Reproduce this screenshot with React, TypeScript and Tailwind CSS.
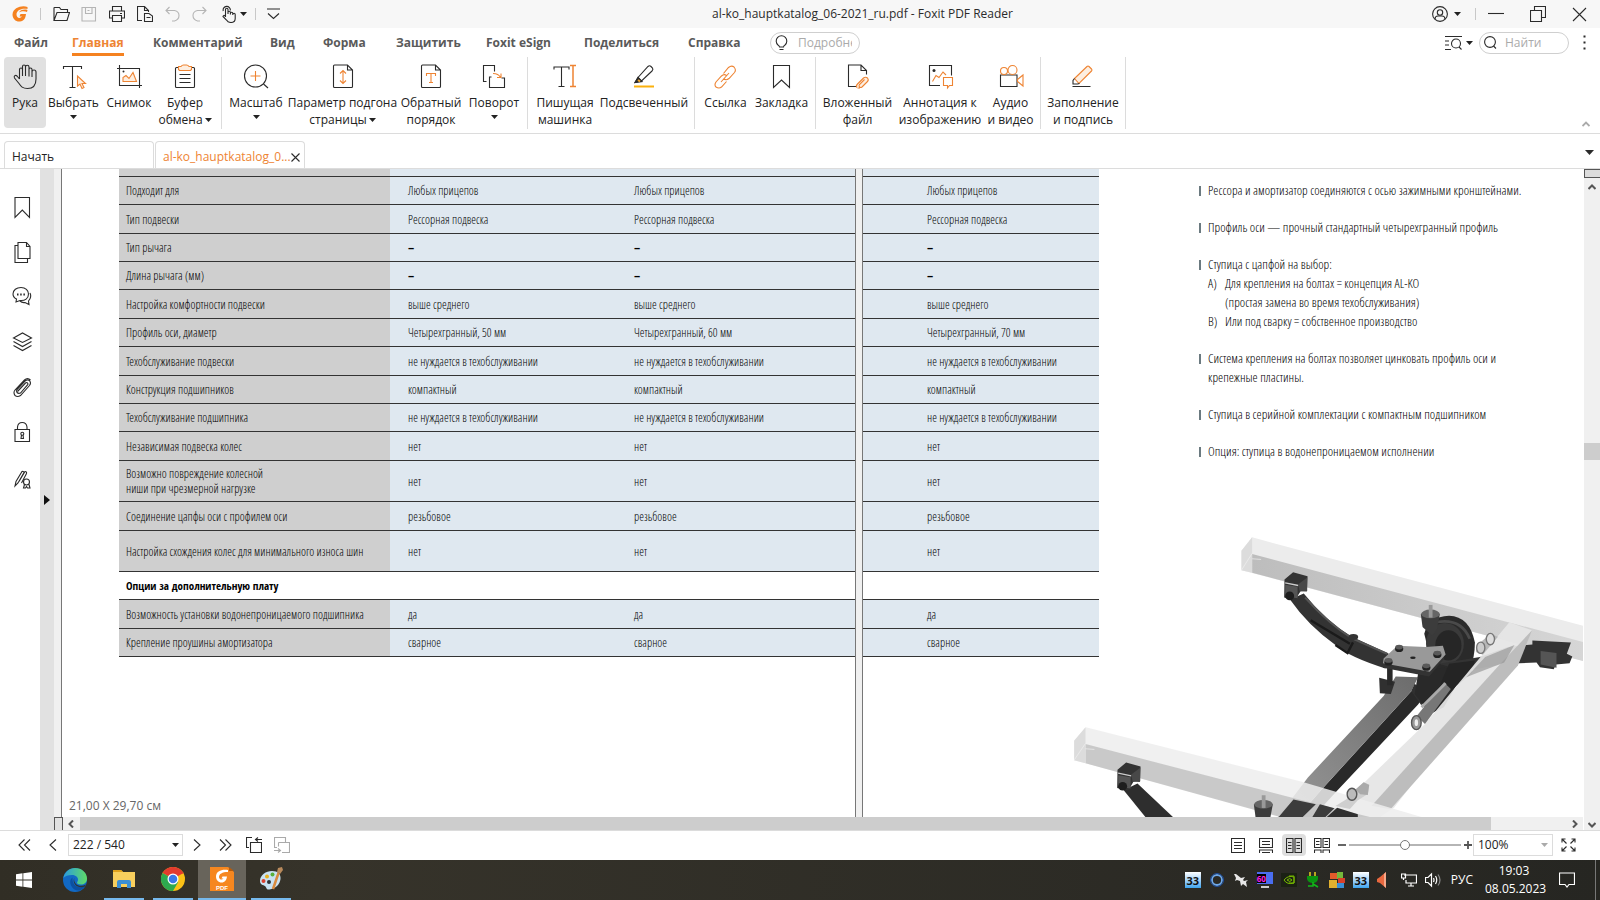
import { useState } from "react";
import type { ReactNode } from "react";

interface IconProps {
  w?: number;
  h?: number;
  box?: string;
  className?: string;
  children: ReactNode;
}

// Base for every line icon
function Icon({ w = 28, h = 28, box, className = "", children }: IconProps) {
  return (
    <svg
      width={w}
      height={h}
      viewBox={box ?? `0 0 ${w} ${h}`}
      fill="none"
      stroke="#2b2b2b"
      strokeWidth="1.1"
      className={`shrink-0 ${className}`}
      aria-hidden="true"
    >
      {children}
    </svg>
  );
}

function Caret({ className = "" }: { className?: string }) {
  return (
    <svg width="7" height="4" viewBox="0 0 7 4" className={`shrink-0 ${className}`} aria-hidden="true">
      <path d="M0 0h7L3.500 4z" fill="currentColor" />
    </svg>
  );
}

const O = "#ee8433";

const toolIcons: Record<string, ReactNode> = {
  hand: (
    <Icon>
      <path d="M8.500 16V6.500a1.500 1.500 0 0 1 3 0V13M11.500 13V3.500a1.500 1.500 0 0 1 3 0V13M14.500 12.500V4a1.500 1.500 0 0 1 3.500 0v9.500M18 13.500V6.500a1.500 1.500 0 0 1 3 0V9M21 14V9a1.500 1.500 0 0 1 4 0v7c0 6-3 9.500-8.500 9.500-5 0-6.500-2-8.500-5L3.500 15c-1-2 1-3.500 2.500-2l2.500 3" />
    </Icon>
  ),
  select: (
    <Icon>
      <path d="M3.500 6V3.500h18V6M12.500 3.500v21M9.500 24.500h6" />
      <path d="M17.500 13v10l2.500-2 2 4.500 2-1-2-4h3.500z" stroke={O} fill="#fdeee0" />
    </Icon>
  ),
  snapshot: (
    <Icon>
      <path d="M4.500 2v20.500H27M2 5.500h22.500V25" />
      <path d="M8 18.500v-4l3-2 3 3 4-6 3.500 9z" stroke={O} fill="#fdeee0" />
      <circle cx="8.500" cy="8.500" r="1" fill="#2b2b2b" stroke="none" />
    </Icon>
  ),
  clipboard: (
    <Icon>
      <path d="M7 4.500H5.500q-1 0-1 1v18q0 1 1 1h17q1 0 1-1v-18q0-1-1-1H21M8.500 11.500h11M8.500 15.500h11M8.500 19.500h11" />
      <path d="M7.500 3.500H10q1-1.500 2.500-1.500h3q1.500 0 2.500 1.500h2.500v3l-1 1h-11l-1-1z" stroke={O} fill="#fdeee0" />
    </Icon>
  ),
  zoom: (
    <Icon>
      <circle cx="13.500" cy="13" r="11" />
      <path d="M21.500 21l4.500 4" />
      <path d="M13.500 8v10M8.500 13h10" stroke={O} />
    </Icon>
  ),
  fit: (
    <Icon>
      <path d="M4.500 3q0-1 1-1h13l5 5v16.500q0 1-1 1h-17q-1 0-1-1zM18.500 2v5h5" />
      <path d="M14 7.500v13M11 10.500l3-3 3 3M11 17.500l3 3 3-3" stroke={O} />
    </Icon>
  ),
  reflow: (
    <Icon>
      <path d="M4.500 3q0-1 1-1h13l5 5v16.500q0 1-1 1h-17q-1 0-1-1zM18.500 2v5h5" />
      <path d="M9.500 13v-2.500h9V13M14 10.500v9M12 19.500h4" stroke={O} />
    </Icon>
  ),
  rotate: (
    <Icon>
      <path d="M6.500 18.500h-3v-16h11v6M9.500 15v9.500h15v-9.500H21.500M9.500 15v-1h2" />
      <path d="M13 10.500c4 0 6 1 7.500 4M17 14.500h4v-4" stroke={O} />
    </Icon>
  ),
  typewriter: (
    <Icon>
      <path d="M3 6.500V4h15v2.500M10.500 4v19M7.500 23.500h6" />
      <path d="M19 2.500h6M22 2.500v21M19 23.500h6" stroke={O} strokeWidth="1.500" />
    </Icon>
  ),
  highlight: (
    <Icon>
      <path d="M5 19.500l3-5 10-11q1.500-1.500 3 0l1.500 1.500q1 1.500-.5 3l-10.500 10zM8 14.500l4 4" />
      <path d="M5 19.500l3-5 4 4z" fill="#2b2b2b" />
      <path d="M8 17l2 1.500" stroke="#f5a623" strokeWidth="2" />
      <path d="M4 23.500h20" stroke="#fbb10d" strokeWidth="2" />
    </Icon>
  ),
  link: (
    <Icon>
      <path
        d="M11.500 10.500l5-6q3-2.500 5.500-.5 2.500 3 .5 5.500l-5.500 6q-3 2.500-5.500 0M14.500 12.500q-2.500-2-5 .5l-5.500 6q-2 3 0 5 3 2 5.500 0l5-5.500M9 19l8-9"
        stroke={O}
      />
    </Icon>
  ),
  bookmark: (
    <Icon>
      <path d="M5.500 2.500h16v22L13.500 17l-8 7.500z" />
    </Icon>
  ),
  attach: (
    <Icon>
      <path d="M12 23.500H4.500V2H17l5.500 5.500v4M17 2v5.500h5.500" />
      <path d="M13 24.500c-1-1-.5-2.500.5-3.500l6-6q2-1.500 4 0 1.500 2 0 3.500l-5.500 5.500q-1.500 1-2.500 0t0-2.500l5-5M13.500 25h2.500" stroke={O} fill="#fdeee0" />
    </Icon>
  ),
  imageNote: (
    <Icon>
      <path d="M14 22.500H3.500v-20h22v10" />
      <circle cx="8" cy="7.500" r="1.500" fill="#2b2b2b" stroke="none" />
      <path d="M6.500 18.500l3.500-6 3 2 4-5.500 3 3M17.500 14.500h9v8h-3l-2 2.500v-2.500h-4z" stroke={O} />
    </Icon>
  ),
  media: (
    <Icon>
      <path d="M3.500 12h16.500v11.500H3.500z" />
      <circle cx="7" cy="8" r="3.500" stroke={O} />
      <circle cx="15.500" cy="7" r="4.500" stroke={O} />
      <path d="M20.500 16.500l5.500-4.500v11l-5.500-4.500z" stroke={O} />
    </Icon>
  ),
  sign: (
    <Icon>
      <path d="M5.500 15.500L18 3.500q1-1 2 0l2.500 2.500q1 1 0 2L10 20.500z" stroke={O} fill="#fdeee0" />
      <path d="M5.500 15.500L4 17.500v3.500h4.500l2-.5M3.500 23.500h18" />
    </Icon>
  ),
};

interface Tool {
  id: string;
  width: string;
  lines: string[];
  caret?: "below" | "inline";
}

const toolGroups: { pad: string; tools: Tool[] }[] = [
  {
    pad: "pl-1 pr-2",
    tools: [
      { id: "hand", width: "w-[42px]", lines: ["Рука"] },
      { id: "select", width: "w-[55px]", lines: ["Выбрать"], caret: "below" },
      { id: "snapshot", width: "w-[56px]", lines: ["Снимок"] },
      { id: "clipboard", width: "w-[56px]", lines: ["Буфер", "обмена"], caret: "inline" },
    ],
  },
  {
    pad: "pl-1 pr-0.5",
    tools: [
      { id: "zoom", width: "w-[60px]", lines: ["Масштаб"], caret: "below" },
      { id: "fit", width: "w-[113px]", lines: ["Параметр подгона", "страницы"], caret: "inline" },
      { id: "reflow", width: "w-[64px]", lines: ["Обратный", "порядок"] },
      { id: "rotate", width: "w-[62px]", lines: ["Поворот"], caret: "below" },
    ],
  },
  {
    pad: "pl-1 pr-1",
    tools: [
      { id: "typewriter", width: "w-[66px]", lines: ["Пишущая", "машинка"] },
      { id: "highlight", width: "w-[92px]", lines: ["Подсвеченный"] },
    ],
  },
  {
    pad: "pl-1 pr-1",
    tools: [
      { id: "link", width: "w-[53px]", lines: ["Ссылка"] },
      { id: "bookmark", width: "w-[59px]", lines: ["Закладка"] },
    ],
  },
  {
    pad: "pl-1 pr-1",
    tools: [
      { id: "attach", width: "w-[75px]", lines: ["Вложенный", "файл"] },
      { id: "imageNote", width: "w-[90px]", lines: ["Аннотация к", "изображению"] },
      { id: "media", width: "w-[51px]", lines: ["Аудио", "и видео"] },
    ],
  },
  {
    pad: "pl-1 pr-1",
    tools: [{ id: "sign", width: "w-[76px]", lines: ["Заполнение", "и подпись"] }],
  },
];

const menu = [
  { label: "Файл", width: "w-[58px]" },
  { label: "Главная", width: "w-[81px]" },
  { label: "Комментарий", width: "w-[117px]" },
  { label: "Вид", width: "w-[53px]" },
  { label: "Форма", width: "w-[73px]" },
  { label: "Защитить", width: "w-[90px]" },
  { label: "Foxit eSign", width: "w-[98px]" },
  { label: "Поделиться", width: "w-[104px]" },
  { label: "Справка", width: "w-[82px]" },
];

interface SpecRow {
  label: string;
  values: string[];
  height: string;
  section?: boolean;
}

const same = (v: string) => [v, v, v];

const rows: SpecRow[] = [
  { label: "Подходит для", values: same("Любых прицепов"), height: "h-[28px]" },
  { label: "Тип подвески", values: same("Рессорная подвеска"), height: "h-[29px]" },
  { label: "Тип рычага", values: same("–"), height: "h-[28px]" },
  { label: "Длина рычага (мм)", values: same("–"), height: "h-[28px]" },
  { label: "Настройка комфортности подвески", values: same("выше среднего"), height: "h-[29px]" },
  {
    label: "Профиль оси, диаметр",
    values: ["Четырехгранный, 50 мм", "Четырехгранный, 60 мм", "Четырехгранный, 70 мм"],
    height: "h-[28px]",
  },
  { label: "Техобслуживание подвески", values: same("не нуждается в техобслуживании"), height: "h-[29px]" },
  { label: "Конструкция подшипников", values: same("компактный"), height: "h-[28px]" },
  { label: "Техобслуживание подшипника", values: same("не нуждается в техобслуживании"), height: "h-[28px]" },
  { label: "Независимая подвеска колес", values: same("нет"), height: "h-[29px]" },
  { label: "Возможно повреждение колесной\nниши при чрезмерной нагрузке", values: same("нет"), height: "h-[41px]" },
  { label: "Соединение цапфы оси с профилем оси", values: same("резьбовое"), height: "h-[29px]" },
  { label: "Настройка схождения колес для минимального износа шин", values: same("нет"), height: "h-[41px]" },
  { label: "Опции за дополнительную плату", values: [], height: "h-[28px]", section: true },
  { label: "Возможность установки водонепроницаемого подшипника", values: same("да"), height: "h-[29px]" },
  { label: "Крепление проушины амортизатора", values: same("сварное"), height: "h-[28px]" },
];

function TitleBar() {
  return (
    <header className="flex h-[28px] shrink-0 items-center bg-[#f7f7f7]">
      <div className="flex w-[44.5%] items-center">
        <svg width="16" height="16" viewBox="0 0 16 16" className="ml-3" aria-hidden="true">
          <path d="M15.500 1C10-1 1 1.500.5 8.500.5 13 4 16 8 15.500c4-.5 5.500-3 6-7.500H8.500l-1 2.500h2.500C8 13 4.500 12 4.500 8.500 4.500 4.500 9 2 15.500 3z" fill="#f58220" />
          <path d="M15.500 4C12 3 8 4 7 6.500c2-1.500 6-1.500 8-.5z" fill="#f58220" />
        </svg>
        <span className="ml-3 h-3 w-px bg-[#c8c8c8]" />
        <button aria-label="Открыть" className="ml-3">
          <Icon w={17} h={16}>
            <path d="M1 14.500V2q0-.5.5-.5h5l1.500 2h6.500v3M1 14.500L4 6.500h12.500l-2.500 8z" />
          </Icon>
        </button>
        <button aria-label="Сохранить" className="ml-[11px]">
          <Icon w={16} h={16}>
            <path d="M1 1.500h13.500v13.500H1zM4.500 1.500v6H11v-6M6.500 4.500h2" stroke="#b5b5b5" />
          </Icon>
        </button>
        <button aria-label="Печать" className="ml-3">
          <Icon w={16} h={16}>
            <path d="M3.500 5V.500h9V5M3.500 12H.5V5h15v7h-3M3.500 9.500h9v6h-9zM11 7.500h2" />
          </Icon>
        </button>
        <button aria-label="Создать" className="ml-3">
          <Icon w={16} h={16}>
            <path d="M5 14.500H.5V.5h7l4 4V6M7.500.5v4h4M7.500 7.500H12l3.500 2.500v5.500h-8zM9.500 11.500h4" />
          </Icon>
        </button>
        <button aria-label="Отменить" className="ml-3">
          <Icon w={15} h={16}>
            <path d="M4.500 1L1 4.500 4.500 8M1 4.500h8.500q4.500 1 4.500 5t-4.500 5.500H7" stroke="#b5b5b5" />
          </Icon>
        </button>
        <button aria-label="Повторить" className="ml-3">
          <Icon w={15} h={16}>
            <path d="M10.500 1L14 4.500 10.500 8M14 4.500H5.500Q1 5.500 1 9.500T5.500 15H8" stroke="#b5b5b5" />
          </Icon>
        </button>
        <button aria-label="Касание" className="ml-3.5 flex items-center gap-1">
          <Icon w={15} h={18}>
            <path d="M4.500 12V4.500a1.200 1.200 0 0 1 2.500 0V9M7 9V7.500a1.200 1.200 0 0 1 2.400 0V9.500M9.400 8.500a1.200 1.200 0 0 1 2.400 0V10M11.800 9.500a1.200 1.200 0 0 1 2.400 0v4q0 4-4.200 4-3 0-4.500-2.500l-3.500-3.500q.5-2 2.500-.3M2.300 6a3.600 3.600 0 1 1 7-.5" />
          </Icon>
          <Caret />
        </button>
        <span className="ml-2 h-3 w-px bg-[#c8c8c8]" />
        <button aria-label="Настроить панель" className="ml-[11px]">
          <Icon w={13} h={12}>
            <path d="M0 1h13M1 5.500l5.500 5 5.500-5" />
          </Icon>
        </button>
      </div>
      <h1 className="text-[12px] text-[#2b2b2b]">al-ko_hauptkatalog_06-2021_ru.pdf - Foxit PDF Reader</h1>
      <div className="flex flex-1 items-center justify-end pr-[13px]">
        <button aria-label="Учётная запись" className="flex items-center gap-1.5">
          <Icon w={16} h={16}>
            <circle cx="8" cy="8" r="7.400" />
            <circle cx="8" cy="6.500" r="2.700" />
            <path d="M3 13q0-3 3-3h4q3 0 3 3" />
          </Icon>
          <Caret />
        </button>
        <span className="ml-3.5 h-3 w-px bg-[#c8c8c8]" />
        <button aria-label="Свернуть" className="ml-3">
          <Icon w={16} h={16}>
            <path d="M0 7.500h16" />
          </Icon>
        </button>
        <button aria-label="Развернуть" className="ml-[26px]">
          <Icon w={16} h={16}>
            <path d="M.5 4.500h11v11H.5zM4.500 4.500v-4h11v11h-4" />
          </Icon>
        </button>
        <button aria-label="Закрыть" className="ml-[26px]">
          <Icon w={15} h={15}>
            <path d="M1 1l13 13M14 1L1 14" />
          </Icon>
        </button>
      </div>
    </header>
  );
}

function MenuBar() {
  return (
    <nav className="flex h-[29px] shrink-0 items-center pl-3.5">
      {menu.map((item) => (
        <div key={item.label} className={`shrink-0 ${item.width}`}>
          <button
            className={`border-b-3 pt-0.5 pb-px text-[12px] leading-[19px] font-bold whitespace-nowrap ${
              item.label === "Главная" ? "border-[#f58220] text-[#ee8433]" : "border-transparent text-[#5a5a5a]"
            }`}
          >
            {item.label}
          </button>
        </div>
      ))}
      <label className="flex h-[22px] w-[90px] items-center gap-2.5 rounded-full border border-[#cfcfcf] px-1">
        <Icon w={13} h={16}>
          <path d="M4.500 12Q4.500 11 3 10A5.300 5.300 0 1 1 10 10Q8.500 11 8.500 12zM4.500 14.500h4" />
        </Icon>
        <input aria-label="Подробнее" placeholder="Подробнее" className="w-[54px] text-[12px] outline-none placeholder:text-[#aaa]" />
      </label>
      <div className="ml-auto flex items-center pr-3.5">
        <button aria-label="Расширенный поиск" className="flex items-center gap-1">
          <Icon w={17} h={14}>
            <path d="M0 .5h17M0 5h4M0 9h4M0 13.500h6" />
            <circle cx="11" cy="7.500" r="4.500" />
            <path d="M14 11l2.500 2.500" />
          </Icon>
          <Caret />
        </button>
        <label className="ml-1.5 flex h-[22px] w-[90px] items-center gap-2 rounded-full border border-[#cfcfcf] px-1">
          <Icon w={13} h={13}>
            <circle cx="6" cy="6" r="5.400" />
            <path d="M9.500 10l2.500 2.500" />
          </Icon>
          <input aria-label="Найти" placeholder="Найти" className="w-[50px] text-[12px] outline-none placeholder:text-[#aaa]" />
        </label>
        <button aria-label="Ещё" className="ml-3.5">
          <svg width="3" height="15" viewBox="0 0 3 15" fill="#2b2b2b" aria-hidden="true">
            <path d="M.5.5h2v2h-2zM.5 6.500h2v2h-2zM.5 12.500h2v2h-2z" />
          </svg>
        </button>
      </div>
    </nav>
  );
}

function Ribbon() {
  return (
    <div className="flex h-[77px] shrink-0 items-start border-b border-[#dcdcdc]">
      {toolGroups.map((group, i) => (
        <div key={i} className={`flex h-[72px] border-r border-[#dcdcdc] ${group.pad}`}>
          {group.tools.map((tool) => (
            <button
              key={tool.id}
              className={`flex h-[71px] flex-col items-center rounded pt-1.5 text-[12px] leading-[17px] whitespace-nowrap ${tool.width} ${
                tool.id === "hand" ? "bg-[#e1e1e1]" : ""
              }`}
            >
              {toolIcons[tool.id]}
              <span className="mt-[3px]">{tool.lines[0]}</span>
              {tool.lines[1] && (
                <span className="flex items-center gap-0.5">
                  {tool.lines[1]}
                  {tool.caret === "inline" && <Caret />}
                </span>
              )}
              {tool.caret === "below" && <Caret className="mt-1" />}
            </button>
          ))}
        </div>
      ))}
      <button aria-label="Свернуть ленту" className="mt-auto mr-2.5 mb-1.5 ml-auto">
        <Icon w={8} h={6}>
          <path d="M.5 5L4 1.500 7.500 5" stroke="#aaa" strokeWidth="1.800" />
        </Icon>
      </button>
    </div>
  );
}

function TabStrip() {
  return (
    <div className="flex h-[35px] shrink-0 items-end border-b border-[#dcdcdc] pl-1">
      <button className="h-[27px] w-[150px] rounded-t border border-b-0 border-[#dcdcdc] pt-1 pl-[7px] text-left text-[12px]">Начать</button>
      <div className="ml-px flex h-[27px] w-[150px] items-center rounded-t border border-b-0 border-[#dcdcdc] pt-1 pr-1 pl-[7px] text-[12px] text-[#ee8433]">
        <button className="flex-1 text-left whitespace-nowrap">al-ko_hauptkatalog_0...</button>
        <button aria-label="Закрыть вкладку">
          <Icon w={9} h={9}>
            <path d="M.5.5l8 8M8.500.5l-8 8" />
          </Icon>
        </button>
      </div>
      <button aria-label="Список вкладок" className="mr-1.5 mb-[13px] ml-auto">
        <svg width="9" height="5" viewBox="0 0 9 5" aria-hidden="true">
          <path d="M0 0h9L4.500 5z" fill="#2b2b2b" />
        </svg>
      </button>
    </div>
  );
}

const sideIcons: { label: string; art: ReactNode }[] = [
  { label: "Закладки", art: <path d="M3 1.500h14.500v20L10.300 14 3 21.500z" /> },
  { label: "Страницы", art: <path d="M6 1.500h8.500L18 5.500v12H6zM14.500 1.500v4H18M6 4.500H3v17h12.500v-4" /> },
  {
    label: "Комментарии",
    art: (
      <>
        <path d="M4.500 13l-.5 3 4-1.500c5 .5 8.500-2 8.500-6.500C16.500 4.500 13.500 1.500 9 1.500S1 4 1 8c0 2.500 1.500 4 3.500 5zM18 7q2 4-1.500 8l.5 3.500-4-2q-3 .5-5-1.500" />
        <path d="M5 8.500h1.500M8.200 8.500h1.500M11.400 8.500h1.500" strokeWidth="1.800" />
      </>
    ),
  },
  { label: "Слои", art: <path d="M1.500 7L10.500 2l9 5-9 4.500zM1.500 10.500l9 5 9-5M1.500 14.500l9 5 9-5" /> },
  {
    label: "Вложения",
    art: (
      <path d="M5.500 15.500l8-8.500q1-1 2 0t0 2L8.500 17q-2 1-3.500-.5-1-1.500 0-3l8-8.500q2.500-2 4.500-.5 2 2.500 0 5L8.500 19.500q-3 2-5.500 0-2-3 0-5.500L12.500 4q3-3 6 0" />
    ),
  },
  {
    label: "Безопасность",
    art: (
      <>
        <path d="M3 8.500h14.500v12H3zM5.500 8.500V6q.5-4.500 4.700-4.500T15 6v2.500M9.500 14l-.5 3.500h2.500l-.5-3.500" />
        <circle cx="10.300" cy="12.700" r="1.500" />
      </>
    ),
  },
  {
    label: "Подписи",
    art: (
      <>
        <path d="M3 20l1-4.500 6-10q1.500-.5 2 1l-6 10.500zM7 15.500l6-10q2 0 1.500 2L9.500 17" />
        <circle cx="14.500" cy="16" r="3" />
        <path d="M12.500 18.500l-1 3.500h2l1-1.500 1 1.500h2.500l-1-3.500" />
      </>
    ),
  },
];

function SideBar() {
  return (
    <aside className="flex w-10 shrink-0 flex-col items-center gap-[22px] pt-[27px]">
      {sideIcons.map((item) => (
        <button key={item.label} aria-label={item.label} className="ml-1">
          <Icon w={21} h={23}>
            {item.art}
          </Icon>
        </button>
      ))}
    </aside>
  );
}

const cell = "border-b border-[#333] p-0 align-middle";

function ValueCell({ value, pad, tinted = true }: { value?: string; pad: string; tinted?: boolean }) {
  return (
    <td
      className={`${cell} ${pad} whitespace-nowrap ${tinted ? "bg-[#dfe8f0]" : ""} ${
        value === "–" ? "font-['Open_Sans_Condensed','Open_Sans',sans-serif] text-[13px] font-bold" : ""
      }`}
    >
      {value}
    </td>
  );
}

function LeftPage() {
  return (
    <article className="flex w-[794px] shrink-0 flex-col border-r border-[#777] bg-white">
      <table className="ml-[57px] w-[736px] table-fixed border-separate border-spacing-0 font-['Open_Sans_Condensed_Light','Open_Sans',sans-serif] text-[12px] leading-[15px] text-black">
        <colgroup>
          <col className="w-[271px]" />
          <col className="w-[226px]" />
          <col />
        </colgroup>
        <tbody>
          <tr className="h-[8px]">
            <td className={`${cell} bg-[#cfcfcf]`} />
            <td className={`${cell} bg-[#dfe8f0]`} />
            <td className={`${cell} bg-[#dfe8f0]`} />
          </tr>
          {rows.map((row) =>
            row.section ? (
              <tr key={row.label} className={row.height}>
                <th
                  colSpan={3}
                  className={`${cell} pl-[7px] text-left font-['Open_Sans_Condensed','Open_Sans',sans-serif] text-[11px] font-bold`}
                >
                  {row.label}
                </th>
              </tr>
            ) : (
              <tr key={row.label} className={row.height}>
                <th className={`${cell} bg-[#cfcfcf] pl-[7px] text-left font-normal whitespace-pre`}>{row.label}</th>
                <ValueCell value={row.values[0]} pad="pl-[18px]" />
                <ValueCell value={row.values[1]} pad="pl-[18px]" />
              </tr>
            )
          )}
        </tbody>
      </table>
      <p className="mt-auto pb-[3px] pl-[7px] text-[12px] leading-[17px] text-[#666]">21,00 X 29,70 см</p>
    </article>
  );
}

// Hanger bracket at the end of each leaf spring
function SpringBracket() {
  return (
    <g>
      <path d="M652 208l25-22 42 12-2 46-18-2-8 14-8 14-32-8z" fill="#333" />
      <path d="M654 218l38 8" stroke="#ccc" strokeWidth="4" />
      <path d="M654 224l36 6v34l-36-6z" fill="#555" />
      <path d="M692 222l26-20v40l-22 2z" fill="#484848" />
      <circle cx="667" cy="257" r="13" fill="#1e1e1e" />
    </g>
  );
}

function Bumper() {
  return (
    <g>
      <path d="M1048 312q28-24 55 0l-8 44-14 20-28-26z" fill="#3c3c3c" />
      <ellipse cx="1076" cy="311" rx="27" ry="13" fill="#666" />
      <path d="M1071 284h11v38h-11z" fill="#999" />
    </g>
  );
}

function AxleDrawing() {
  return (
    <svg
      viewBox="0 60 1519 858"
      preserveAspectRatio="none"
      className="absolute right-0 bottom-0 h-[287px] w-[523px]"
      role="img"
      aria-label="Рессорная ось"
    >
      <defs>
        <linearGradient id="rail" x1="0" y1="0" x2="1" y2="0">
          <stop offset="0" stopColor="#bdbdbd" />
          <stop offset="1" stopColor="#d6d6d6" />
        </linearGradient>
        <linearGradient id="beam" x1="1" y1="0" x2="0" y2="1">
          <stop offset="0" stopColor="#6c6c6c" />
          <stop offset="1" stopColor="#999" />
        </linearGradient>
      </defs>

      {/* back rail */}
      <path d="M527 122L558 82 1519 346V452L527 180z" fill="#ececec" />
      <path d="M558 132L1519 395V452L558 188z" fill="url(#rail)" />
      <path d="M527 122l31-40v106l-31-8z" fill="#dcdcdc" />
      <path d="M527 180l31-50M558 146l26 2" stroke="#f0f0f0" strokeWidth="2" />

      {/* back spring, left arm */}
      <path d="M668 268L708 250Q770 330 845 378L955 430 945 474Q840 440 800 404 720 345 668 268z" fill="#333" />
      <path d="M728 330l114 70M800 404l35 24 16-32" stroke="#1a1a1a" strokeWidth="7" fill="none" />
      <path d="M712 262Q780 340 850 385l100 45" stroke="#555" strokeWidth="6" fill="none" />
      <ellipse cx="852" cy="380" rx="14" ry="9" fill="#333" />
      <SpringBracket />

      {/* hub */}
      <path d="M1058 370Q1070 318 1130 316q60 2 75 80 0 90-60 130l-60-40z" fill="#2a2a2a" />
      <ellipse cx="1118" cy="400" rx="55" ry="62" fill="#3a3a3a" />
      <path d="M1095 335q70-12 95 50" stroke="#4a4a4a" strokeWidth="8" fill="none" />
      <ellipse cx="1128" cy="405" rx="38" ry="45" fill="#262626" />
      <Bumper />

      {/* spring, right arm */}
      <path d="M1100 460l120-20 80-30 72-8v-12l112 6-12 34 16 8-8 20-40 4-6 14-40-6-10-14-90 4-120 22z" fill="#333" />
      <path d="M1396 422l46 6v44l-46-10z" fill="#555" />

      {/* axle beam */}
      <path d="M1020 542l40 10-20 30L800 845 735 918H690L758 838z" fill="#292929" />
      <path d="M975 498l65 2-20 42L758 838 690 918H633L720 800 940 556z" fill="url(#beam)" />
      <path d="M1030 520l30 25-10 40-30-43zM927 502l46 12-12 36-32-2z" fill="#303030" />
      <path d="M950 470l16 4v50h-16zM1040 490l75-20 50 30-50 90-40 20-45-60z" fill="#292929" />
      <path d="M1130 460l75-10-10 40-60 50-30-20z" fill="#242424" />

      {/* cross member */}
      <path d="M1305 336l66 24L970 890l-40 28H780L1060 640z" fill="#e6e6e6" fillOpacity=".94" />
      <path d="M1371 360L1330 465 960 895 905 884 1270 470z" fill="#bdbdbd" />
      <path d="M1180 500l55-60 85-36-30 52-90 36z" fill="#8e8e8e" fillOpacity=".6" />

      {/* shock absorber */}
      <path d="M1115 515l20 20-75 105-24-24z" fill="#777" />
      <path d="M1050 590l70-72" stroke="#aaa" strokeWidth="8" />
      <ellipse cx="1035" cy="636" rx="14" ry="21" fill="#999" stroke="#555" strokeWidth="4" />
      <ellipse cx="1035" cy="636" rx="5" ry="10" fill="#eee" />
      <path d="M1210 405l40-34 22 8-44 54-20-8z" fill="#b8b8b8" />
      <ellipse cx="1250" cy="386" rx="12" ry="17" fill="#ddd" stroke="#777" strokeWidth="4" />
      <ellipse cx="1222" cy="412" rx="12" ry="17" fill="#ccc" stroke="#777" strokeWidth="4" />

      {/* clamp plate */}
      <path d="M938 456l132 24 46-48v12l-44 54-134-26z" fill="#333" />
      <path d="M940 444l40-38 82 4 50-4 8 26-46 52-136-26z" fill="#999" />
      {[
        [985, 410],
        [954, 450],
        [1064, 466],
        [1096, 428],
      ].map(([x, y]) => (
        <g key={x}>
          <ellipse cx={x} cy={y + 5} rx="12" ry="10" fill="#222" />
          <ellipse cx={x} cy={y} rx="11" ry="7" fill="#5a5a5a" />
        </g>
      ))}
      <ellipse cx="1025" cy="442" rx="8" ry="4" fill="#222" />

      {/* front rail */}
      <path d="M41 690L75 650 700 812 1050 918H650L41 748z" fill="#ededed" fillOpacity=".86" />
      <path d="M74 700L680 862 900 918H640L74 757z" fill="#c2c2c2" fillOpacity=".86" />
      <path d="M41 690l33-40v107l-33-9z" fill="#dcdcdc" />
      <path d="M41 748l33-50M74 714l26 2" stroke="#f0f0f0" strokeWidth="2" />
      <path d="M185 838L225 818 328 918H248z" fill="#2e2e2e" />
      <path d="M678 866l65 14-38 38h-70zM755 880l42 12-26 26h-38z" fill="#3c3c3c" />
      <path d="M775 918l30-28 60 20v8z" fill="#303030" />
      <path d="M800 885l32-20 50-50 16 6-4 28-30 20-22 25z" fill="#cfcfcf" />
      <path d="M858 836l24-22 16 8-4 30-22-2z" fill="#aaa" />
      <ellipse cx="848" cy="850" rx="14" ry="18" fill="#bbb" stroke="#555" strokeWidth="4" />
      <g transform="translate(-485 569)">
        <SpringBracket />
        <Bumper />
      </g>
    </svg>
  );
}

function Bullet({ children }: { children: ReactNode }) {
  return (
    <li className="flex">
      <span className="mt-[5px] mr-[7px] h-2.5 w-0.5 shrink-0 bg-[#6b7a80]" />
      <div>{children}</div>
    </li>
  );
}

function RightPage() {
  return (
    <article className="relative flex min-w-0 flex-1 items-start overflow-hidden border-l border-[#777] bg-white font-['Open_Sans_Condensed_Light','Open_Sans',sans-serif] text-black">
      <table className="w-[236px] shrink-0 table-fixed border-separate border-spacing-0 text-[12px] leading-[15px]">
        <tbody>
          <tr className="h-[8px]">
            <td className={`${cell} bg-[#dfe8f0]`} />
          </tr>
          {rows.map((row) => (
            <tr key={row.label} className={row.height}>
              <ValueCell value={row.values[2]} pad="pl-[64px]" tinted={!row.section} />
            </tr>
          ))}
        </tbody>
      </table>
      <ul className="mt-3 ml-[100px] flex flex-col gap-[18px] text-[13px] leading-[19px] whitespace-nowrap">
        <Bullet>Рессора и амортизатор соединяются с осью зажимными кронштейнами.</Bullet>
        <Bullet>Профиль оси — прочный стандартный четырехгранный профиль</Bullet>
        <Bullet>
          Ступица с цапфой на выбор:
          <div className="grid grid-cols-[17px_auto]">
            <span>A)</span>
            <span>
              Для крепления на болтах = концепция AL-KO
              <br />
              (простая замена во время техобслуживания)
            </span>
            <span>B)</span>
            <span>Или под сварку = собственное производство</span>
          </div>
        </Bullet>
        <Bullet>
          Система крепления на болтах позволяет цинковать профиль оси и
          <br />
          крепежные пластины.
        </Bullet>
        <Bullet>Ступица в серийной комплектации с компактным подшипником</Bullet>
        <Bullet>Опция: ступица в водонепроницаемом исполнении</Bullet>
      </ul>
      <AxleDrawing />
    </article>
  );
}

function Chevron({ d }: { d: string }) {
  return (
    <Icon w={8} h={8}>
      <path d={d} stroke="#555" strokeWidth="2" />
    </Icon>
  );
}

function Viewer() {
  return (
    <main className="flex min-h-0 flex-1">
      <SideBar />
      <div className="flex w-3.5 shrink-0 items-center justify-center bg-[#e1e1e1]">
        <button aria-label="Показать панель">
          <svg width="6" height="10" viewBox="0 0 6 10" aria-hidden="true">
            <path d="M0 0l6 5-6 5z" fill="#111" />
          </svg>
        </button>
      </div>
      <div className="flex min-w-0 flex-1 flex-col">
        <div className="flex min-h-0 flex-1 gap-1.5 overflow-hidden bg-[#f0f0f0] pl-[7px]">
          <div className="flex border-l border-[#777]">
            <LeftPage />
          </div>
          <RightPage />
        </div>
        <div className="flex h-[13px] shrink-0 items-center bg-[#f0f0f0]">
          <span className="h-[14px] w-[9px] border border-b-0 border-[#555] bg-[#e1e1e1]" />
          <button aria-label="Влево" className="w-[17px] pl-1">
            <Chevron d="M6 .5L2.500 4 6 7.500" />
          </button>
          <span className="h-full w-[92.3%] bg-[#cdcdcd]" />
          <button aria-label="Вправо" className="mr-1 ml-auto">
            <Chevron d="M2 .5L5.500 4 2 7.500" />
          </button>
        </div>
      </div>
      <div className="flex w-[17px] shrink-0 flex-col items-center border-l border-white bg-[#f0f0f0]">
        <span className="h-[9px] w-[17px] shrink-0 border border-[#555] bg-[#dcdcdc]" />
        <button aria-label="Вверх" className="mt-[5px]">
          <Chevron d="M.5 6L4 2.500 7.500 6" />
        </button>
        <div className="flex w-full flex-1 flex-col">
          <span className="basis-[40%]" />
          <span className="h-[17px] bg-[#cdcdcd]" />
        </div>
        <button aria-label="Вниз" className="mb-px">
          <Chevron d="M.5 2L4 5.500 7.500 2" />
        </button>
      </div>
    </main>
  );
}

function StatusBar() {
  const [zoom, setZoom] = useState(50);

  return (
    <footer className="flex h-[30px] shrink-0 items-center border-t border-[#dcdcdc] pb-px pl-[18px] text-[12px]">
      <button aria-label="Первая страница">
        <Icon w={13} h={12}>
          <path d="M6.500.5L1 6l5.500 5.500M12 .5L6.500 6l5.500 5.500" />
        </Icon>
      </button>
      <button aria-label="Предыдущая страница" className="ml-[18px]">
        <Icon w={8} h={12}>
          <path d="M7 .5L1 6l6 5.500" />
        </Icon>
      </button>
      <div className="ml-[11px] flex h-[22px] w-[115px] items-center border border-[#dcdcdc] pr-[3px] pl-1">
        <input aria-label="Номер страницы" defaultValue="222 / 540" className="w-full min-w-0 outline-none" />
        <button aria-label="Список страниц">
          <Caret />
        </button>
      </div>
      <button aria-label="Следующая страница" className="ml-2.5">
        <Icon w={8} h={12}>
          <path d="M1 .5L7 6l-6 5.500" />
        </Icon>
      </button>
      <button aria-label="Последняя страница" className="ml-[18px]">
        <Icon w={13} h={12}>
          <path d="M1 .5L6.500 6 1 11.500M6.500.5L12 6l-5.500 5.500" />
        </Icon>
      </button>
      <button aria-label="Предыдущий вид" className="ml-3.5">
        <Icon w={16} h={16}>
          <path d="M3 10.500H.5v-10H6M4.500 5.500h11v10h-11zM16 2.500h-6M12 .5l-2.500 2L12 4.500" />
        </Icon>
      </button>
      <button aria-label="Следующий вид" className="ml-3">
        <Icon w={16} h={16}>
          <path d="M3 10.500H.5v-10h11v5M7 5.500h8.500v10H8M4.500 5.500v4M0 13.500h6M4 11.500l2.500 2L4 15.500M4.500 5.500H7" stroke="#aaa" />
        </Icon>
      </button>

      <div className="ml-auto flex items-center">
        <button aria-label="Одна страница">
          <Icon w={14} h={15}>
            <path d="M.5.5h13v14H.5zM3 4.500h8M3 7.500h8M3 10.500h8" />
          </Icon>
        </button>
        <button aria-label="Непрерывно" className="ml-3.5">
          <Icon w={14} h={15}>
            <path d="M.5.5h13v9H.5zM3 3.500h8M3 6.500h8M.5 15v-3h13v3M3 14.500h8" />
          </Icon>
        </button>
        <button aria-label="Разворот" className="ml-[9px] flex h-[22px] w-6 items-center justify-center rounded bg-[#dedede]">
          <Icon w={16} h={15}>
            <path d="M.5.5h6.500v14H.5zM9 .5h6.500v14H9zM2 4.500h3.500M2 7.500h3.500M2 10.500h3.500M10.500 4.500H14M10.500 7.500H14M10.500 10.500H14" />
          </Icon>
        </button>
        <button aria-label="Непрерывный разворот" className="ml-2">
          <Icon w={16} h={15}>
            <path d="M.5.5h6.500v9H.5zM9 .5h6.500v9H9zM2 3.500h3.500M2 6.500h3.500M10.500 3.500H14M10.500 6.500H14M.5 15v-3H7v3M9 15v-3h6.500v3" />
          </Icon>
        </button>
        <button aria-label="Уменьшить" className="ml-2">
          <Icon w={8} h={8}>
            <path d="M0 4h8" strokeWidth="1.800" stroke="#555" />
          </Icon>
        </button>
        <input
          type="range"
          aria-label="Масштаб"
          value={zoom}
          onChange={(e) => setZoom(Number(e.target.value))}
          className="mx-[3px] h-3 w-[112px] appearance-none bg-[linear-gradient(#b5b5b5,#b5b5b5)] bg-[length:100%_2px] bg-center bg-no-repeat [&::-webkit-slider-thumb]:size-[10px] [&::-webkit-slider-thumb]:appearance-none [&::-webkit-slider-thumb]:rounded-full [&::-webkit-slider-thumb]:border [&::-webkit-slider-thumb]:border-[#777] [&::-webkit-slider-thumb]:bg-white"
        />
        <button aria-label="Увеличить">
          <Icon w={8} h={8}>
            <path d="M0 4h8M4 0v8" strokeWidth="1.800" stroke="#555" />
          </Icon>
        </button>
        <div className="ml-px flex h-[22px] w-20 items-center border border-[#dcdcdc] pr-1">
          <select aria-label="Процент масштаба" className="w-full appearance-none pl-1 outline-none">
            <option>100%</option>
          </select>
          <Caret className="text-[#aaa]" />
        </div>
        <button aria-label="Во весь экран" className="mr-6 ml-2">
          <Icon w={15} h={14}>
            <path d="M5.500 5.500l-4-4M1 4.500V1h3.500M9.500 5.500l4-4M10.500 1H14v3.500M5.500 8.500l-4 4M1 9.500V13h3.500M9.500 8.500l4 4M10.500 13H14V9.500" />
          </Icon>
        </button>
      </div>
    </footer>
  );
}

function TemperatureIcon() {
  return (
    <span className="flex size-4 items-center justify-center bg-linear-to-b from-white to-[#3aa5ee] text-[11px] font-bold leading-none text-[#111]">
      33
    </span>
  );
}

function TaskBar() {
  return (
    <div className="flex h-10 shrink-0 items-center bg-linear-to-r from-[#312e25] via-[#36332a] via-20% to-[#262622] text-white">
      <button aria-label="Пуск" className="flex h-full w-12 items-center justify-center">
        <svg width="16" height="16" viewBox="0 0 16 16" fill="#fff" aria-hidden="true">
          <path d="M0 2.200L6.500 1.300v6.200H0zM7.300 1.200L16 0v7.500H7.300zM0 8.400h6.500v6.300L0 13.800zM7.300 8.400H16V16l-8.700-1.200z" />
        </svg>
      </button>
      <button aria-label="Edge" className="ml-[3px] flex h-full w-12 items-center justify-center">
        <svg width="24" height="24" viewBox="0 0 24 24" aria-hidden="true">
          <defs>
            <linearGradient id="edgeTop" x1="0" y1="0" x2="1" y2="0">
              <stop offset="0" stopColor="#2a9be0" />
              <stop offset="1" stopColor="#5fdc66" />
            </linearGradient>
          </defs>
          <circle cx="12" cy="12" r="12" fill="#1269c4" />
          <path d="M.3 10C1.500 4 6.500 0 12 0c7 0 12 5 12 10.500 0 4-3 6-6 6-3 0-4-1-4-2s1-1 1-3c0-2-2-4.500-6-4.500S2 8 .3 10z" fill="url(#edgeTop)" />
          <path d="M9.500 9.500C7 11 6.500 14 8 17.500c1.500 3.500 5 5.500 8.500 5C19 21.500 21 20 22 18c-2 1-4 1.500-6 1-4-.5-7-4-6.500-9.500z" fill="#0c4fa0" />
          <path d="M11.500 10c-1 2 0 4 1.500 6 2 2 6 2.500 10 .5l-1 2c-4 1.500-8 .5-10-2-1.500-2-2-4.500-.5-6.500z" fill="#2d3338" />
        </svg>
      </button>
      <button aria-label="Проводник" className="ml-[5px] flex h-full w-10 items-center justify-center border-b-2 border-[#76b9ed]">
        <svg width="22" height="20" viewBox="0 0 22 20" aria-hidden="true">
          <path d="M0 1h8l2 2h12v15H0z" fill="#f8cf5d" />
          <path d="M0 1h8l2 2H0z" fill="#e0a21c" />
          <path d="M4 19v-6q0-2 2-2h10q2 0 2 2v6h-4v-4H8v4z" fill="#3b8fd4" />
        </svg>
      </button>
      <button aria-label="Chrome" className="ml-[9px] flex h-full w-10 items-center justify-center border-b-2 border-[#76b9ed]">
        <svg width="24" height="24" viewBox="0 0 24 24" aria-hidden="true">
          <circle cx="12" cy="12" r="12" fill="#fbc116" />
          <path d="M12 12L1.600 6A12 12 0 0 1 22.400 6z" fill="#e33b2e" />
          <path d="M12 12L1.600 6A12 12 0 0 0 12 24l5.200-9z" fill="#2da94f" />
          <path d="M12 6.500h10.600L22.400 6 12 5z" fill="#e33b2e" />
          <circle cx="12" cy="12" r="5.500" fill="#fff" />
          <circle cx="12" cy="12" r="4.300" fill="#3b78e7" />
        </svg>
      </button>
      <button aria-label="Foxit" className="ml-[5px] flex h-full w-12 items-center justify-center border-b-2 border-[#76b9ed] bg-[#68645b]">
        <svg width="24" height="24" viewBox="0 0 24 24" aria-hidden="true">
          <path d="M0 0h18l6 5v19H0z" fill="#f6871f" />
          <path d="M19 0l5 4h-5z" fill="#b65b0c" />
          <path d="M18 3C12 2 6 4 6 9.500c0 3.500 2.500 6 5.500 6 3.500 0 5-2.500 5.500-6h-4.500l-1 2h2c-1.500 2-4.500 1-4.500-1.500C9 7 12 5 18 5z" fill="#fff" />
          <text x="12" y="23" textAnchor="middle" fontSize="6" fontWeight="bold" fill="#fff" fontFamily="Liberation Sans">PDF</text>
        </svg>
      </button>
      <button aria-label="Paint" className="ml-[5px] flex h-full w-10 items-center justify-center border-b-2 border-[#76b9ed]">
        <svg width="24" height="24" viewBox="0 0 24 24" aria-hidden="true">
          <path d="M1 14C1 8 7 4 13 4s9 3 8.500 8-5 10-11 10.500C7 23 7.500 20 6 19S1 18 1 14z" fill="#c9e2f2" />
          <circle cx="4.500" cy="14" r="2" fill="#d9412f" />
          <circle cx="8" cy="9.500" r="2" fill="#e8b120" />
          <circle cx="13.500" cy="7.500" r="2" fill="#58b13c" />
          <circle cx="10" cy="15" r="2" fill="#2d3338" />
          <path d="M19.500 6L14 22" stroke="#d98a3d" strokeWidth="2.500" />
          <path d="M18 5l1-4 4-1 1 3-3 4z" fill="#b98a5c" />
        </svg>
      </button>

      <div className="ml-auto flex items-center gap-2">
        <TemperatureIcon />
        <svg width="16" height="16" viewBox="0 0 16 16" aria-hidden="true">
          <circle cx="8" cy="8" r="5" fill="none" stroke="#6fa8e8" strokeWidth="1.800" />
          <circle cx="8" cy="8" r="6.500" fill="none" stroke="#1d4e9e" />
        </svg>
        <svg width="16" height="16" viewBox="0 0 16 16" fill="#e8e8e8" aria-hidden="true">
          <path d="M1 2l2 0 5 4 4-1-2 3 1 1 4-1-2 2 1 5-4-3-2 2-1-5-3-1-2 1 1-3z" />
        </svg>
        <span className="flex h-4 w-4 flex-col items-center">
          <span className="flex h-3 w-4 items-center bg-[#4a6df0]">
            <span className="bg-black text-[8px] leading-[9px] font-bold text-[#ff20e0]">60</span>
          </span>
          <span className="mt-0.5 h-0.5 w-2 bg-[#ccc]" />
        </span>
        <svg width="16" height="16" viewBox="0 0 16 16" fill="none" stroke="#76b900" aria-hidden="true">
          <path d="M0 1h16v14H0z" fill="#1b2114" stroke="none" />
          <path d="M3 8q4-5 10-3v6q-7 2-10-3z" />
          <path d="M6 8q3-3 5 0-2 3-5 0zM8 4h5v7H8" />
        </svg>
        <svg width="16" height="16" viewBox="0 0 16 16" fill="none" aria-hidden="true">
          <path d="M5 0v5M10 0v5" stroke="#e8d020" strokeWidth="1.500" />
          <path d="M2 4h11v3q-1 4-5 4-5 0-6-4z" fill="#0a9310" />
          <path d="M8 10v4H3M8 12l5 3" stroke="#12b81a" strokeWidth="1.500" />
        </svg>
        <svg width="16" height="16" viewBox="0 0 16 16" aria-hidden="true">
          <path d="M1 1h7v6H1z" fill="#e35b2b" />
          <path d="M8 0h6v7H8z" fill="#75b83b" />
          <path d="M0 8h8v8H0z" fill="#e0b02e" />
          <path d="M9 6h7v5H9z" fill="#d8402a" />
          <path d="M8 11h7v5H8z" fill="#3a8fd6" />
        </svg>
        <TemperatureIcon />
        <svg width="16" height="16" viewBox="0 0 16 16" aria-hidden="true">
          <path d="M0 7l3-2 6-5v16l-6-5-3-1z" fill="#e8683f" />
          <path d="M7 2l2-2v16l-2-2z" fill="#f5a88a" />
        </svg>
        <svg width="16" height="16" viewBox="0 0 16 16" fill="none" stroke="#fff" strokeWidth="1.200" aria-hidden="true">
          <path d="M4 4V3h11.500v8H5V8M10 11v3M7 14h6M.5 2h4v4h-4zM2.500 6v2" />
        </svg>
        <svg width="16" height="16" viewBox="0 0 16 16" fill="none" stroke="#fff" strokeWidth="1.200" aria-hidden="true">
          <path d="M.5 5.500H3L6.500 2v12L3 10.500H.5zM8.500 6q1 2 0 4M10.500 4q2.500 4 0 8" />
          <path d="M13 2.500q4 5.500 0 11" stroke="#888" />
        </svg>
        <span className="ml-0.5 text-[12px]">РУС</span>
        <time className="ml-1 w-[58px] text-center text-[12px] leading-[18px]">
          19:03
          <br />
          08.05.2023
        </time>
        <button aria-label="Уведомления" className="ml-2">
          <svg width="16" height="16" viewBox="0 0 16 16" fill="none" stroke="#fff" strokeWidth="1.200" aria-hidden="true">
            <path d="M.5 1h15v11.500H10l-2 2.500-2-2.500H.5z" />
          </svg>
        </button>
        <span className="mr-1 ml-3 h-10 w-px bg-[#777]" />
      </div>
    </div>
  );
}

export default function App() {
  return (
    <div className="flex h-screen flex-col overflow-hidden bg-white font-['Open_Sans','Noto_Sans',sans-serif] text-[#222]">
      <TitleBar />
      <MenuBar />
      <Ribbon />
      <TabStrip />
      <Viewer />
      <StatusBar />
      <TaskBar />
    </div>
  );
}
